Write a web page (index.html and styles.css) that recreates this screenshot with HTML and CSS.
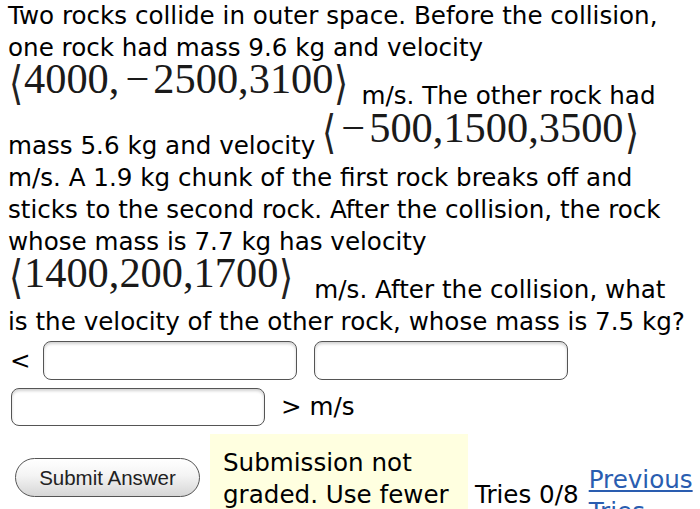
FILE: index.html
```html
<!DOCTYPE html>
<html>
<head>
<meta charset="utf-8">
<link rel="stylesheet" href="styles.css">
</head>
<body>
<div class="problem">
  <div class="line">Two rocks collide in outer space. Before the collision,</div>
  <div class="line">one rock had mass 9.6 kg and velocity</div>
  <div class="line mline l3">
    <span class="math"><span class="br">⟨</span>4000,<span class="op">−</span>2500,3100<span class="br">⟩</span></span>
    <span class="txt t3">m/s. The other rock had</span>
  </div>
  <div class="line mline l4">
    <span class="txt t4">mass 5.6 kg and velocity</span>
    <span class="math m4"><span class="br">⟨</span><span class="op lead">−</span>500,1500,3500<span class="br">⟩</span></span>
  </div>
  <div class="line">m/s. A 1.9 kg chunk of the first rock breaks off and</div>
  <div class="line">sticks to the second rock. After the collision, the rock</div>
  <div class="line">whose mass is 7.7 kg has velocity</div>
  <div class="line mline l8">
    <span class="math"><span class="br">⟨</span>1400,200,1700<span class="br">⟩</span></span>
    <span class="txt t8">m/s. After the collision, what</span>
  </div>
  <div class="line">is the velocity of the other rock, whose mass is 7.5 kg?</div>
</div>

<div class="answer-row first">
  <span class="sym">&lt;</span>
  <input class="field" type="text">
  <input class="field" type="text">
</div>
<div class="answer-row second">
  <input class="field" type="text">
  <span class="sym">&gt; m/s</span>
</div>

<div class="submit-row">
  <button class="submit" type="button">Submit Answer</button>
  <div class="notice">Submission not graded. Use fewer</div>
  <div class="tries">Tries 0/8</div>
  <a class="prev" href="#">Previous Tries</a>
</div>
</body>
</html>
```
FILE: styles.css
```css
html, body {
  margin: 0;
  padding: 0;
  background: #ffffff;
}
body {
  padding-left: 8px;
  font-family: "DejaVu Sans", Verdana, sans-serif;
  font-size: 24.6px;
  color: #000;
  overflow: hidden;
  height: 509px;
}
.problem {
  display: flex;
  flex-direction: column;
}
.line {
  line-height: 32px;
  height: 32px;
  white-space: nowrap;
}
.mline {
  display: flex;
  align-items: flex-start;
  height: 48px;
}
.l4 { height: 50px; }
.math {
  font-family: "Liberation Serif", "DejaVu Serif", serif;
  font-size: 42.4px;
  line-height: 30px;
  margin-top: 0;
  white-space: nowrap;
  color: #1a1a1a;
}
.op {
  margin: 0 4px 0 6px;
}
.op.lead {
  margin: 0 4px 0 4px;
}
.br {
  font-family: "DejaVu Sans", sans-serif;
  font-weight: 200;
  display: inline-block;
  transform: translateY(5px) scale(0.85, 1.08);
  transform-origin: 50% 50%;
  color: #222;
}
.txt {
  line-height: 32px;
}
.t3 { margin-top: 16px; margin-left: 12px; }
.t4 { margin-top: 18px; }
.m4 { margin-top: 1px; margin-left: 6px; }
.t8 { margin-top: 16px; margin-left: 20px; }

.answer-row {
  display: flex;
  align-items: center;
}
.answer-row.first {
  margin-top: 3px;
  padding-left: 2px;
}
.answer-row.second {
  margin-top: 8px;
  padding-left: 3px;
}
.sym {
  line-height: 32px;
}
.first .sym { margin-right: 12px; }
.second .sym { margin-left: 16px; }
.field {
  box-sizing: border-box;
  width: 254px;
  height: 39px;
  margin: 0;
  border: 1.5px solid #555;
  border-radius: 8px;
  background: #fff;
  box-shadow: inset 0 2px 3px rgba(0, 0, 0, 0.18);
}
.first .field + .field { margin-left: 17px; }
.second .field { height: 38px; }

.submit-row {
  display: flex;
  align-items: flex-start;
  margin-top: 8px;
}
.submit {
  box-sizing: border-box;
  width: 185px;
  height: 39px;
  margin: 24px 0 0 7px;
  border: 1.5px solid #555;
  border-radius: 20px;
  background: linear-gradient(#ffffff 0%, #f4f4f4 45%, #d6d6d6 100%);
  font-family: "Liberation Sans", Arial, sans-serif;
  font-size: 20.5px;
  color: #222;
  padding: 0;
}
.notice {
  box-sizing: border-box;
  width: 258px;
  height: 90px;
  margin-left: 10px;
  padding: 13px 0 0 13px;
  background: #ffffe0;
  line-height: 32px;
}
.tries {
  margin: 45px 0 0 7px;
  line-height: 32px;
  white-space: nowrap;
}
.prev {
  width: 106px;
  margin: 30px 0 0 10px;
  line-height: 32px;
  color: #2a5db0;
  text-decoration: underline;
}
```
